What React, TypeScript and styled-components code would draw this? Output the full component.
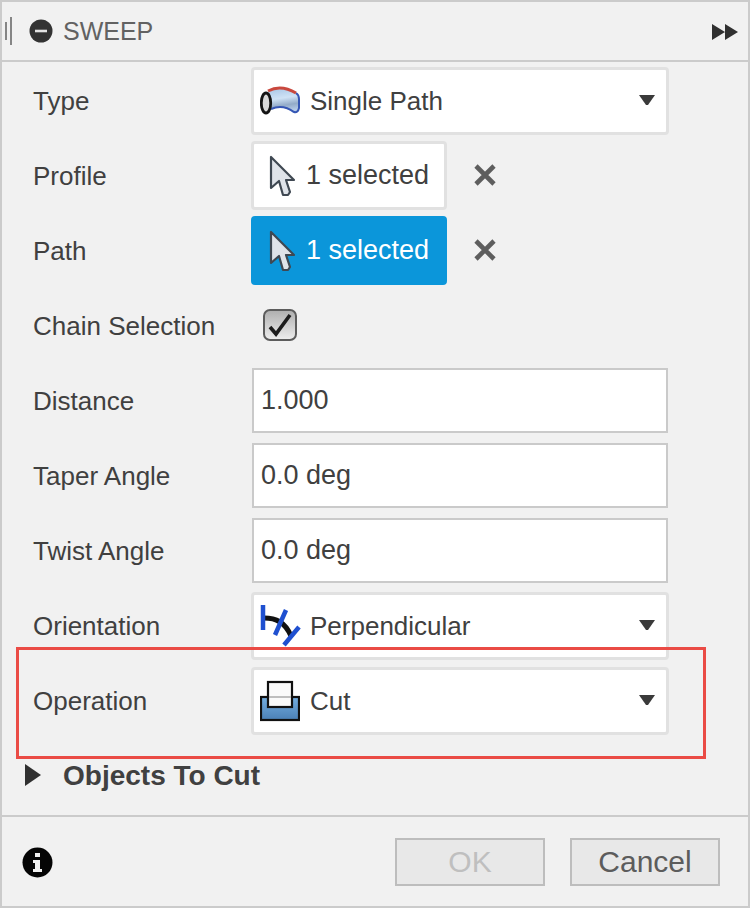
import React, { useState } from "react";
import styled, { createGlobalStyle } from "styled-components";

const GlobalStyle = createGlobalStyle`
  *, *::before, *::after { box-sizing: border-box; }
  body {
    margin: 0;
    background: #f1f1f1;
    font-family: "Liberation Sans", Arial, sans-serif;
  }
  button, input, select { font-family: inherit; margin: 0; }
`;

const Panel = styled.main`
  display: flex;
  flex-direction: column;
  border: 2px solid #cbcbcb;
  background: #f1f1f1;
  color: #404040;
`;

const Header = styled.header`
  display: flex;
  align-items: center;
  height: 60px;
  padding: 0 10px 0 3px;
  border-bottom: 2px solid #cbcbcb;
`;

const Title = styled.h1`
  flex: 1;
  margin: 0 0 0 10px;
  font-size: 25px;
  line-height: 30px;
  font-weight: 400;
  color: #626262;
`;

const IconButton = styled.button`
  display: flex;
  align-items: center;
  justify-content: center;
  padding: 0;
  border: 0;
  background: none;
  cursor: pointer;
`;

const Grip = styled.svg`
  margin-right: 17px;
`;

const Form = styled.form`
  display: flex;
  flex-direction: column;
`;

const Fields = styled.div`
  padding: 1px 0 2px;
`;

const Row = styled.div`
  position: relative;
  display: grid;
  grid-template-columns: 218px minmax(0, 1fr);
  align-items: center;
  height: 75px;
  padding: 0 79px 0 31px;
`;

const Label = styled.label`
  font-size: 26px;
  line-height: 30px;
`;

const Combo = styled.div`
  display: grid;
  align-items: center;
  height: 68px;
  border: 3px solid #e1e1e1;
  border-radius: 4px;
  background: #fff;

  > * { grid-area: 1 / 1; }
  > svg { pointer-events: none; z-index: 1; }
`;

const ComboIcon = styled.svg`
  margin-left: 6px;
`;

const Caret = styled.svg`
  justify-self: end;
  margin-right: 11px;
`;

const Select = styled.select`
  appearance: none;
  width: 100%;
  height: 100%;
  padding: 0 36px 0 56px;
  border: 0;
  outline: 0;
  background: transparent;
  color: #404040;
  font-size: 26px;
`;

const TextField = styled.input`
  height: 65px;
  min-width: 0;
  margin: 0 1px;
  padding: 0 7px;
  border: 2px solid #cacaca;
  outline: 0;
  background: #fff;
  color: #404040;
  font-size: 27px;
`;

const Picker = styled.div`
  display: flex;
  align-items: center;
  gap: 26px;
`;

const PickButton = styled.button<{ $active?: boolean }>`
  display: flex;
  align-items: center;
  gap: 10px;
  width: 196px;
  height: 69px;
  padding: 0 0 0 15px;
  border: 3px solid ${(p) => (p.$active ? "#0b96da" : "#e1e1e1")};
  border-radius: 4px;
  background: ${(p) => (p.$active ? "#0b96da" : "#fff")};
  color: ${(p) => (p.$active ? "#fff" : "#404040")};
  font-size: 27px;
  white-space: nowrap;
`;

const CheckWrap = styled.span`
  display: grid;
  width: 34px;
  height: 34px;
  margin-left: 12px;

  > * { grid-area: 1 / 1; }
  > svg { pointer-events: none; z-index: 1; }
`;

const CheckInput = styled.input`
  appearance: none;
  width: 34px;
  height: 32px;
  border: 2px solid #5c5c5c;
  border-radius: 7px;
  background: linear-gradient(#b0b0b0, #ececec);
`;

const Highlight = styled.div`
  position: absolute;
  inset: -16px 42px -21px 14px;
  border: 3px solid #ea4b45;
  pointer-events: none;
  z-index: 2;
`;

const Section = styled.button`
  display: flex;
  align-items: center;
  gap: 22px;
  width: 100%;
  height: 75px;
  padding: 0 23px;
  border: 0;
  background: none;
  color: #404040;
  font-size: 28px;
  font-weight: 700;
  text-align: left;
`;

const Footer = styled.footer`
  display: flex;
  align-items: center;
  gap: 25px;
  height: 91px;
  padding: 0 28px 0 20px;
  border-top: 2px solid #cbcbcb;
`;

const InfoButton = styled(IconButton)`
  margin-right: auto;
`;

const ActionButton = styled.button`
  width: 150px;
  height: 48px;
  padding: 0;
  border: 2px solid #bdbdbd;
  background: #e8e8e8;
  color: #5c5c5c;
  font-size: 30px;
  line-height: 40px;

  &:disabled { color: #bfbfbf; }
`;

const CursorIcon = () => (
  <svg width="27" height="42" viewBox="0 0 27 42" aria-hidden="true">
    <path
      d="M2 2V33L10 26L14 40H19L21 37L17 25H25Z"
      fill="#dfe3e9"
      stroke="#3f4852"
      strokeWidth="2.2"
      strokeLinejoin="round"
    />
  </svg>
);

const SweepIcon = () => (
  <ComboIcon width="40" height="30" viewBox="0 0 40 30" aria-hidden="true">
    <defs>
      <linearGradient id="tube" x1="0" y1="0" x2="0.2" y2="1">
        <stop offset="0" stopColor="#a9c6e6" />
        <stop offset="0.45" stopColor="#cfe2f5" />
        <stop offset="0.75" stopColor="#93abc8" />
        <stop offset="1" stopColor="#b5cbe8" />
      </linearGradient>
    </defs>
    <path d="M8 6Q21 0 35 6L39 11V25L36 27H33Q23 18 10 24Z" fill="url(#tube)" />
    <path d="M36 7Q39 9 39 13V22Q38 27 34 26Q23 18 11 23" fill="none" stroke="#3556b4" strokeWidth="2" />
    <path d="M8 5Q21 -2 36 7" fill="none" stroke="#c9483e" strokeWidth="3" />
    <ellipse cx="6" cy="17" rx="4.7" ry="10" fill="#d9d9d9" stroke="#151515" strokeWidth="2.8" />
  </ComboIcon>
);

const PerpendicularIcon = () => (
  <ComboIcon width="41" height="42" viewBox="0 0 41 42" aria-hidden="true">
    <path d="M4 13C16 13 25 17 31 31" fill="none" stroke="#111" strokeWidth="5" />
    <path d="M3 0V25M26 5L15 30M39 22L24 40" fill="none" stroke="#1f50d0" strokeWidth="4.5" />
  </ComboIcon>
);

const CutIcon = () => (
  <ComboIcon width="40" height="42" viewBox="0 0 40 42" aria-hidden="true">
    <defs>
      <linearGradient id="block" x1="0" y1="0" x2="0" y2="1">
        <stop offset="0" stopColor="#74aee0" />
        <stop offset="1" stopColor="#4b80b6" />
      </linearGradient>
    </defs>
    <rect x="1" y="17" width="38" height="23" fill="url(#block)" stroke="#111" strokeWidth="2.2" />
    <rect x="8" y="2" width="24" height="25" fill="#fafafa" stroke="#111" strokeWidth="2.2" />
    <path d="M9 17H31" stroke="#aaa" strokeWidth="1.5" />
  </ComboIcon>
);

type ComboProps = { id: string; label: string; icon: React.ReactNode; options: string[]; marked?: boolean };

const ComboRow = ({ id, label, icon, options, marked }: ComboProps) => (
  <Row>
    <Label htmlFor={id}>{label}</Label>
    <Combo>
      {icon}
      <Select id={id}>
        {options.map((o) => (
          <option key={o}>{o}</option>
        ))}
      </Select>
      <Caret width="16" height="11" viewBox="0 0 16 11" aria-hidden="true">
        <path d="M0 0H16L9 10H7Z" fill="#3a3a3a" />
      </Caret>
    </Combo>
    {marked && <Highlight />}
  </Row>
);

const PickRow = ({ id, label, active }: { id: string; label: string; active?: boolean }) => (
  <Row>
    <Label htmlFor={id}>{label}</Label>
    <Picker>
      <PickButton id={id} type="button" $active={active}>
        <CursorIcon />1 selected
      </PickButton>
      <IconButton type="button" aria-label={`Clear ${label}`}>
        <svg width="24" height="24" viewBox="0 0 24 24" aria-hidden="true">
          <path d="M3 2L21 20M21 2L3 20" stroke="#5e5e5e" strokeWidth="4.6" />
        </svg>
      </IconButton>
    </Picker>
  </Row>
);

const TextRow = ({ id, label, value }: { id: string; label: string; value: string }) => (
  <Row>
    <Label htmlFor={id}>{label}</Label>
    <TextField id={id} type="text" defaultValue={value} />
  </Row>
);

export default function App() {
  const [chain, setChain] = useState(true);

  return (
    <>
      <GlobalStyle />
      <Panel>
        <Header>
          <Grip width="7" height="28" viewBox="0 0 7 28" aria-hidden="true">
            <path d="M1 5V23" stroke="#858585" strokeWidth="2" />
            <path d="M6 0V28" stroke="#858585" strokeWidth="2" />
          </Grip>
          <IconButton type="button" aria-label="Collapse">
            <svg width="24" height="24" viewBox="0 0 24 24" aria-hidden="true">
              <circle cx="12" cy="12" r="11.5" fill="#333" />
              <path d="M6 12H18" stroke="#e4e4e4" strokeWidth="2.6" />
            </svg>
          </IconButton>
          <Title>SWEEP</Title>
          <IconButton type="button" aria-label="Dock panel">
            <svg width="26" height="18" viewBox="0 0 26 18" aria-hidden="true">
              <path d="M0 2L13 10L0 18ZM13 2L26 10L13 18Z" fill="#303030" />
            </svg>
          </IconButton>
        </Header>

        <Form onSubmit={(e) => e.preventDefault()}>
          <Fields>
            <ComboRow id="type" label="Type" icon={<SweepIcon />} options={["Single Path", "Path + Guide Rail"]} />
            <PickRow id="profile" label="Profile" />
            <PickRow id="path" label="Path" active />
            <Row>
              <Label htmlFor="chain">Chain Selection</Label>
              <CheckWrap>
                <CheckInput
                  id="chain"
                  type="checkbox"
                  checked={chain}
                  onChange={(e) => setChain(e.target.checked)}
                />
                {chain && (
                  <svg width="34" height="33" viewBox="0 0 34 33" aria-hidden="true">
                    <path d="M7 18L13 25L27 6" fill="none" stroke="#1c1c1c" strokeWidth="3.6" />
                  </svg>
                )}
              </CheckWrap>
            </Row>
            <TextRow id="distance" label="Distance" value="1.000" />
            <TextRow id="taper" label="Taper Angle" value="0.0 deg" />
            <TextRow id="twist" label="Twist Angle" value="0.0 deg" />
            <ComboRow
              id="orientation"
              label="Orientation"
              icon={<PerpendicularIcon />}
              options={["Perpendicular", "Parallel"]}
            />
            <ComboRow id="operation" label="Operation" icon={<CutIcon />} options={["Cut", "Join"]} marked />
            <Section type="button" aria-expanded="false">
              <svg width="16" height="24" viewBox="0 0 16 24" aria-hidden="true">
                <path d="M0 0L16 11L0 22Z" fill="#303030" />
              </svg>
              Objects To Cut
            </Section>
          </Fields>

          <Footer>
            <InfoButton type="button" aria-label="Information">
              <svg width="31" height="33" viewBox="0 0 31 33" aria-hidden="true">
                <circle cx="15.5" cy="17.5" r="15" fill="#050505" />
                <path d="M13 8H18V12H13ZM11 15H18V24H20V27H11V24H13V18H11Z" fill="#f1f1f1" />
              </svg>
            </InfoButton>
            <ActionButton type="submit" disabled>
              OK
            </ActionButton>
            <ActionButton type="button">Cancel</ActionButton>
          </Footer>
        </Form>
      </Panel>
    </>
  );
}
